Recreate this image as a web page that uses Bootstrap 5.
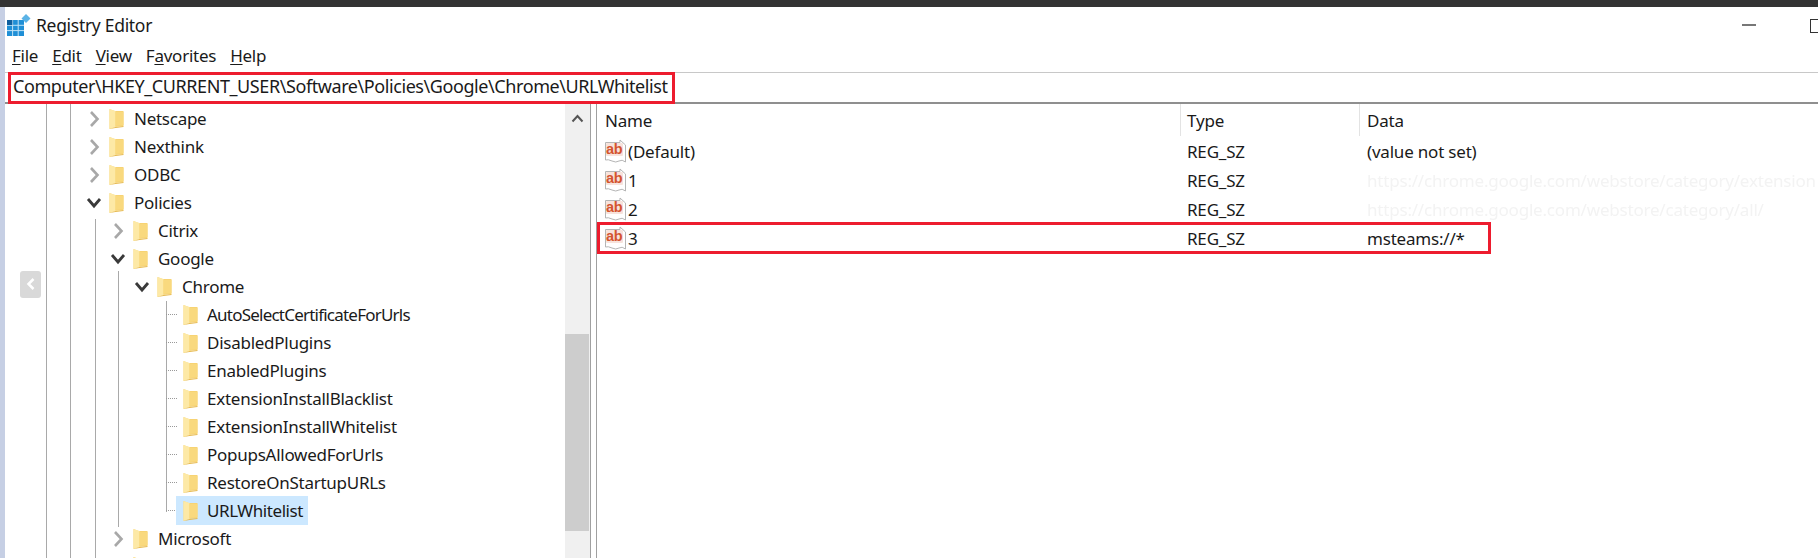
<!DOCTYPE html>
<html lang="en">
<head>
<meta charset="utf-8">
<title>Registry Editor</title>
<link href="https://cdn.jsdelivr.net/npm/bootstrap@5.3.0/dist/css/bootstrap.min.css" rel="stylesheet">
<style>
html,body{height:558px;overflow:hidden;background:#fff}
body{font-family:"Noto Sans","Open Sans",sans-serif;color:#1a1a1a;font-size:17px}
.topstrip{height:7px;background:#333}
.shell{height:551px;border-left:5px solid #c6cfe4}
.titlerow{height:37px;padding-left:2px}
.appico{flex:none}
.titletext{font-size:17.500px;margin-left:5px;letter-spacing:-.3px}
.winmin{width:14px;height:2px;background:#777;margin-right:54px}
.winmax{width:8px;height:14px;border:1px solid #333;border-right:0;margin-top:2px}
.menurow{height:24px;margin-bottom:4px;padding-left:7px;gap:14px;font-size:17px;line-height:22px;letter-spacing:-.25px}
.menurow u{text-underline-offset:2px}
.addrbar{height:32px;border-top:1px solid #c8c8c8;border-bottom:2px solid #8f8f8f;padding-left:3px}
.addrbox{height:32px;margin-top:-1px;border:3px solid #ed1c2e;padding:0 0 0 2px;font-size:18px;line-height:22px;letter-spacing:-.42px;width:667px;white-space:nowrap}
.panes{height:455px;overflow:hidden}
.treepane{flex:0 0 586px;width:586px;position:relative;border-right:1px solid #a0a0a0}
.treewrap{width:560px;height:455px;overflow:hidden;padding-top:1px;
background-image:linear-gradient(#a9a9a9,#a9a9a9),linear-gradient(#a9a9a9,#a9a9a9),linear-gradient(#a9a9a9,#a9a9a9),linear-gradient(#a9a9a9,#a9a9a9),linear-gradient(#a9a9a9,#a9a9a9);
background-repeat:no-repeat;
background-size:1px 455px,1px 455px,1px 340px,1px 256px,1px 211px;
background-position:41px 0,65px 0,90px 115px,113px 167px,161px 197px}
.treerow{height:28px;font-size:17px;letter-spacing:-.26px;white-space:nowrap;line-height:28px}
.tighttext{letter-spacing:-.78px}
.seltext{letter-spacing:-.42px}
.d0{padding-left:81px}.d1{padding-left:105px}.d2{padding-left:129px}.d3{padding-left:161px}
.chevslot{width:22px;flex:none;display:flex;justify-content:center;padding-right:6px}
.leafdots{width:11px;flex:none;height:1px;margin-right:5px;border-top:1px dotted #999}
.fold{flex:none;width:17px;height:22px;margin-right:9px}
.d3 .fold{margin-right:8px}
.selrow{background:#cce8ff;height:29px;margin-left:-6px;padding:0 5px 0 6px;display:flex;align-items:center}
.sbar{position:absolute;left:560px;top:0;width:25px;height:455px;background:#f0f0f0}
.sthumb{position:absolute;left:0;top:230px;width:24px;height:197px;background:#cdcdcd}
.sup{position:absolute;left:6px;top:10px}
.hscrollbtn{position:absolute;left:15px;top:167px;width:21px;height:27px;background:#d9d9d9;border-radius:3px;display:flex;align-items:center;justify-content:center}
.splitgap{width:6px;border-right:1px solid #a0a0a0;flex:none}
.listpane{font-size:17px;letter-spacing:-.2px}
.listhead{height:33px;padding-left:8px}
.cname{width:577px;flex:none}
.ctype{width:179px;flex:none;padding-left:6px}
.cdata{padding-left:7px;white-space:nowrap}
.sep{border-right:1px solid #e3e3e3;height:32px}
.listhead .cname{width:576px}
.listrow{height:29px;padding-left:7px}
.abico{width:23px;height:24px;flex:none;margin-right:1px}
.hiddendata{color:#f3f3f3;filter:blur(.7px)}
.redrow{position:absolute;left:0;top:118px;width:894px;height:32px;border:3px solid #ed1c2e;pointer-events:none}
</style>
</head>
<body>
<svg width="0" height="0" class="position-absolute">
<defs>
<symbol id="fd" viewBox="0 0 16 22">
<path d="M1 1 L6 3 L15 3 L15 18 L6 19 L1 21 Z" fill="#f7d373"/>
<path d="M1 1 L7 3 L7 19 L1 21 Z" fill="#fde9a6"/>
<path d="M7 4 L15 4 L15 17 L7 18 Z" fill="#f9d97e"/>
<path d="M1 21 L7 19 L15 18 L15 19 L7 20 Z" fill="#e6b94e"/>
</symbol>
<symbol id="cr" viewBox="0 0 12 18"><path d="M3 2 L9.500 9 L3 16" fill="none" stroke="#a8a8a8" stroke-width="2.600"/></symbol>
<symbol id="cd" viewBox="0 0 16 12"><path d="M2 2 L8 9 L14 2" fill="none" stroke="#3a3a3a" stroke-width="2.800"/></symbol>
<symbol id="ab" viewBox="0 0 23 24">
<path d="M1.500 3.500 L16 3.500 L16 1 L21.500 6 L21.500 23 Q18 20 15 22 T8 22 T1.500 21 Z" fill="#fff" stroke="#b5b5b5" stroke-width="1"/>
<rect x="2" y="4" width="17" height="13" rx="1" fill="#f7e3dc"/>
<text x="2" y="15" font-family="Liberation Sans, sans-serif" font-weight="700" font-size="14.500" fill="#d4542f">ab</text>
</symbol>
</defs>
</svg>
<div class="topstrip"></div>
<div class="shell d-flex flex-column">
  <div class="titlerow d-flex align-items-center">
    <svg class="appico" width="24" height="22" viewBox="0 0 24 22">
      <rect x="0" y="6" width="17" height="16" fill="#1f8fd6"/>
      <path d="M0 11.300H17M0 16.600H17M5.600 6V22M11.200 6V22" stroke="#bfe3f7" stroke-width="1"/>
      <rect x="0" y="6" width="5.300" height="5" fill="#0f5f9e"/>
      <path d="M19 0 L23.500 4.500 L19 9 L14.500 4.500Z" fill="#5bb3e6"/>
    </svg>
    <span class="titletext">Registry Editor</span>
    <div class="ms-auto d-flex align-items-center"><div class="winmin"></div><div class="winmax"></div></div>
  </div>
  <div class="menurow d-flex align-items-center">
    <span><u>F</u>ile</span><span><u>E</u>dit</span><span><u>V</u>iew</span><span>F<u>a</u>vorites</span><span><u>H</u>elp</span>
  </div>
  <div class="addrbar">
    <div class="addrbox">Computer\HKEY_CURRENT_USER\Software\Policies\Google\Chrome\URLWhitelist</div>
  </div>
  <div class="panes d-flex">
    <div class="treepane">
      <div class="treewrap">
        <div class="treerow d-flex align-items-center d0"><span class="chevslot"><svg width="12" height="18"><use href="#cr"/></svg></span><svg class="fold"><use href="#fd"/></svg>Netscape</div>
        <div class="treerow d-flex align-items-center d0"><span class="chevslot"><svg width="12" height="18"><use href="#cr"/></svg></span><svg class="fold"><use href="#fd"/></svg>Nexthink</div>
        <div class="treerow d-flex align-items-center d0"><span class="chevslot"><svg width="12" height="18"><use href="#cr"/></svg></span><svg class="fold"><use href="#fd"/></svg>ODBC</div>
        <div class="treerow d-flex align-items-center d0"><span class="chevslot"><svg width="16" height="12"><use href="#cd"/></svg></span><svg class="fold"><use href="#fd"/></svg>Policies</div>
        <div class="treerow d-flex align-items-center d1"><span class="chevslot"><svg width="12" height="18"><use href="#cr"/></svg></span><svg class="fold"><use href="#fd"/></svg>Citrix</div>
        <div class="treerow d-flex align-items-center d1"><span class="chevslot"><svg width="16" height="12"><use href="#cd"/></svg></span><svg class="fold"><use href="#fd"/></svg>Google</div>
        <div class="treerow d-flex align-items-center d2"><span class="chevslot"><svg width="16" height="12"><use href="#cd"/></svg></span><svg class="fold"><use href="#fd"/></svg>Chrome</div>
        <div class="treerow d-flex align-items-center d3"><span class="leafdots"></span><svg class="fold"><use href="#fd"/></svg><span class="tighttext">AutoSelectCertificateForUrls</span></div>
        <div class="treerow d-flex align-items-center d3"><span class="leafdots"></span><svg class="fold"><use href="#fd"/></svg>DisabledPlugins</div>
        <div class="treerow d-flex align-items-center d3"><span class="leafdots"></span><svg class="fold"><use href="#fd"/></svg>EnabledPlugins</div>
        <div class="treerow d-flex align-items-center d3"><span class="leafdots"></span><svg class="fold"><use href="#fd"/></svg>ExtensionInstallBlacklist</div>
        <div class="treerow d-flex align-items-center d3"><span class="leafdots"></span><svg class="fold"><use href="#fd"/></svg>ExtensionInstallWhitelist</div>
        <div class="treerow d-flex align-items-center d3"><span class="leafdots"></span><svg class="fold"><use href="#fd"/></svg>PopupsAllowedForUrls</div>
        <div class="treerow d-flex align-items-center d3"><span class="leafdots"></span><svg class="fold"><use href="#fd"/></svg>RestoreOnStartupURLs</div>
        <div class="treerow d-flex align-items-center d3"><span class="leafdots"></span><span class="selrow"><svg class="fold"><use href="#fd"/></svg><span class="seltext">URLWhitelist</span></span></div>
        <div class="treerow d-flex align-items-center d1"><span class="chevslot"><svg width="12" height="18"><use href="#cr"/></svg></span><svg class="fold"><use href="#fd"/></svg>Microsoft</div>
        <div class="treerow d-flex align-items-center d1"><span class="chevslot"></span><svg class="fold"><use href="#fd"/></svg></div>
      </div>
      <div class="hscrollbtn"><svg width="10" height="14" viewBox="0 0 10 14"><path d="M7.500 2 L2.500 7 L7.500 12" fill="none" stroke="#fff" stroke-width="2.500"/></svg></div>
      <div class="sbar">
        <svg class="sup" width="13" height="9" viewBox="0 0 13 9"><path d="M1.500 7.500 L6.500 2 L11.500 7.500" fill="none" stroke="#555" stroke-width="2"/></svg>
        <div class="sthumb"></div>
      </div>
    </div>
    <div class="splitgap"></div>
    <div class="listpane flex-grow-1 position-relative">
      <div class="listhead d-flex align-items-center">
        <div class="cname sep d-flex align-items-center">Name</div>
        <div class="ctype sep d-flex align-items-center">Type</div>
        <div class="cdata">Data</div>
      </div>
      <div class="listrow d-flex align-items-center"><div class="cname d-flex align-items-center"><svg class="abico"><use href="#ab"/></svg>(Default)</div><div class="ctype">REG_SZ</div><div class="cdata">(value not set)</div></div>
      <div class="listrow d-flex align-items-center"><div class="cname d-flex align-items-center"><svg class="abico"><use href="#ab"/></svg>1</div><div class="ctype">REG_SZ</div><div class="cdata hiddendata">https://chrome.google.com/webstore/category/extension</div></div>
      <div class="listrow d-flex align-items-center"><div class="cname d-flex align-items-center"><svg class="abico"><use href="#ab"/></svg>2</div><div class="ctype">REG_SZ</div><div class="cdata hiddendata">https://chrome.google.com/webstore/category/all/</div></div>
      <div class="listrow d-flex align-items-center"><div class="cname d-flex align-items-center"><svg class="abico"><use href="#ab"/></svg>3</div><div class="ctype">REG_SZ</div><div class="cdata">msteams://*</div></div>
      <div class="redrow"></div>
    </div>
  </div>
</div>
<script src="https://cdn.jsdelivr.net/npm/bootstrap@5.3.0/dist/js/bootstrap.bundle.min.js"></script>
</body>
</html>
